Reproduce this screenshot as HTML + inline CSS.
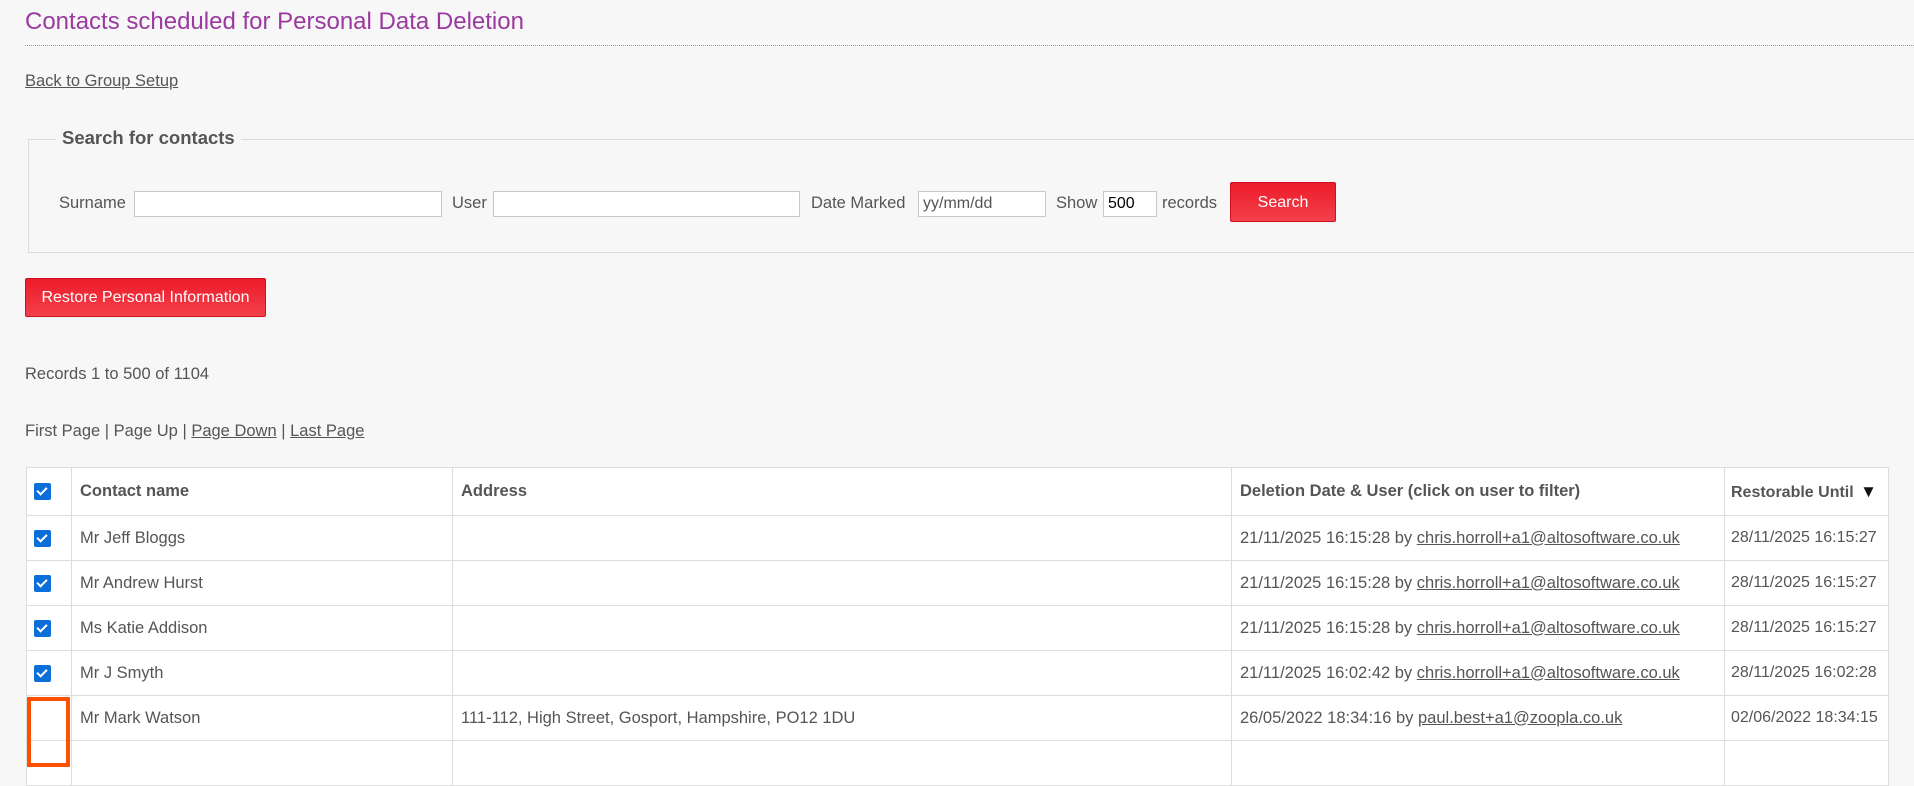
<!DOCTYPE html>
<html><head><meta charset="utf-8"><style>
*{box-sizing:border-box}
body{margin:0;width:1914px;height:746px;overflow:hidden;background:#f7f7f7;font-family:"Liberation Sans",sans-serif;color:#555;font-size:16.5px;position:relative}
.a{position:absolute;white-space:nowrap}
h1{position:absolute;left:25px;top:8px;margin:0;font-weight:normal;font-size:24px;color:#9a3aa0}
.dot{position:absolute;left:25px;top:45px;width:1889px;border-top:1px dotted #999}
a{color:#555;text-decoration:underline}
.fs{position:absolute;left:28px;top:139px;width:1900px;height:114px;border:1px solid #ddd}
.leg{position:absolute;left:56px;top:127px;background:#f7f7f7;padding:0 6px;font-weight:bold;font-size:18.5px;color:#555}
.inp{position:absolute;height:26px;background:#fff;border:1px solid #c8c8c8;font-size:16px;padding:3px 4px;color:#555}
.btn{position:absolute;background:linear-gradient(#ec1c2a,#f3404b);border:1px solid #d01020;border-radius:2px;color:#fff;font-size:16px;text-align:center}
table{position:absolute;left:26px;top:467px;border-collapse:collapse;background:#fff;table-layout:fixed;width:1862px}
td,th{border:1px solid #ddd;padding:0 0 0 8px;text-align:left;height:45px;white-space:nowrap;overflow:hidden}
td:last-child,th:last-child{padding-left:6px;font-size:16px}
th{height:48px;font-weight:bold}
.cb{display:inline-block;width:17px;height:17px;background:#0a6fd8;border-radius:2px;position:relative;vertical-align:middle;margin-left:7px}
.cb:after{content:"";position:absolute;left:5px;top:2px;width:4px;height:8px;border:solid #fff;border-width:0 2px 2px 0;transform:rotate(45deg)}
</style></head><body>
<h1>Contacts scheduled for Personal Data Deletion</h1>
<div class="dot"></div>
<div class="a" style="left:25px;top:72px"><a>Back to Group Setup</a></div>
<div class="fs"></div>
<div class="leg">Search for contacts</div>
<div class="a" style="left:59px;top:194px">Surname</div>
<div class="inp" style="left:134px;top:191px;width:308px"></div>
<div class="a" style="left:452px;top:194px">User</div>
<div class="inp" style="left:493px;top:191px;width:307px"></div>
<div class="a" style="left:811px;top:194px">Date Marked</div>
<div class="inp" style="left:918px;top:191px;width:128px">yy/mm/dd</div>
<div class="a" style="left:1056px;top:194px">Show</div>
<div class="inp" style="left:1103px;top:191px;width:54px;color:#000">500</div>
<div class="a" style="left:1162px;top:194px">records</div>
<div class="btn" style="left:1230px;top:182px;width:106px;height:40px;line-height:40px">Search</div>
<div class="btn" style="left:25px;top:278px;width:241px;height:39px;line-height:38px">Restore Personal Information</div>
<div class="a" style="left:25px;top:365px">Records 1 to 500 of 1104</div>
<div class="a" style="left:25px;top:422px">First Page | Page Up | <a>Page Down</a> | <a>Last Page</a></div>
<table>
<colgroup><col style="width:45px"><col style="width:381px"><col style="width:779px"><col style="width:493px"><col style="width:164px"></colgroup>
<tr><th style="padding:0"><span class="cb"></span></th><th>Contact name</th><th>Address</th><th>Deletion Date &amp; User (click on user to filter)</th><th>Restorable Until <span style="font-size:17px;margin-left:2px;color:#111">▼</span></th></tr>
<tr><td style="padding:0"><span class="cb"></span></td><td>Mr Jeff Bloggs</td><td></td><td>21/11/2025 16:15:28 by <a>chris.horroll+a1@altosoftware.co.uk</a></td><td>28/11/2025 16:15:27</td></tr>
<tr><td style="padding:0"><span class="cb"></span></td><td>Mr Andrew Hurst</td><td></td><td>21/11/2025 16:15:28 by <a>chris.horroll+a1@altosoftware.co.uk</a></td><td>28/11/2025 16:15:27</td></tr>
<tr><td style="padding:0"><span class="cb"></span></td><td>Ms Katie Addison</td><td></td><td>21/11/2025 16:15:28 by <a>chris.horroll+a1@altosoftware.co.uk</a></td><td>28/11/2025 16:15:27</td></tr>
<tr><td style="padding:0"><span class="cb"></span></td><td>Mr J Smyth</td><td></td><td>21/11/2025 16:02:42 by <a>chris.horroll+a1@altosoftware.co.uk</a></td><td>28/11/2025 16:02:28</td></tr>
<tr><td style="padding:0"></td><td>Mr Mark Watson</td><td>111-112, High Street, Gosport, Hampshire, PO12 1DU</td><td>26/05/2022 18:34:16 by <a>paul.best+a1@zoopla.co.uk</a></td><td>02/06/2022 18:34:15</td></tr>
<tr><td style="padding:0"></td><td></td><td></td><td></td><td></td></tr>
</table>
<div class="a" style="left:27px;top:697px;width:43px;height:70px;border:4px solid #ff5000"></div>
</body></html>
